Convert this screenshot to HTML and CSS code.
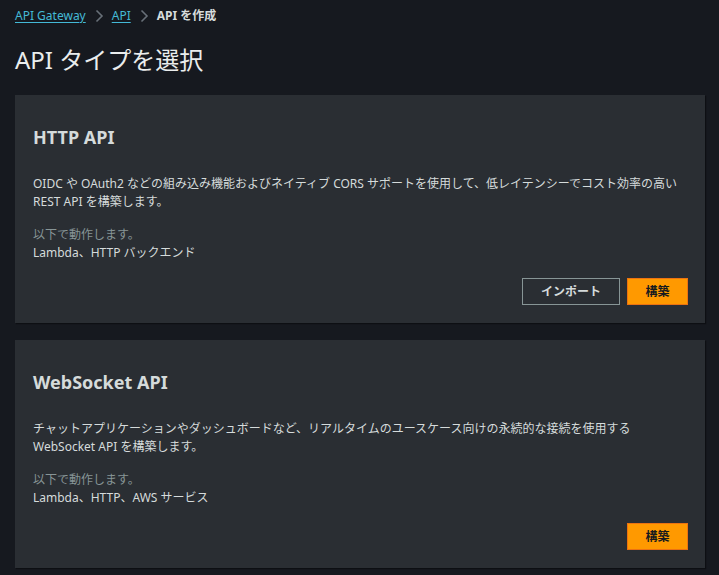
FILE: index.html
```html
<!DOCTYPE html>
<html lang="ja">

<head>
    <meta charset="UTF-8">
    <title>API タイプを選択</title>
    <link rel="stylesheet" href="styles.css">
</head>

<body>
    <div class="page">
        <nav class="breadcrumbs">
            <a class="crumb" href="#">API Gateway</a>
            <svg class="chevron" width="16" height="16" viewBox="0 0 16 16"><path d="M5.5 2.5 11 8l-5.5 5.5" /></svg>
            <a class="crumb" href="#">API</a>
            <svg class="chevron" width="16" height="16" viewBox="0 0 16 16"><path d="M5.5 2.5 11 8l-5.5 5.5" /></svg>
            <span class="crumb-current">API を作成</span>
        </nav>

        <h1 class="page-title">API タイプを選択</h1>

        <div class="card">
            <h2 class="card-title">HTTP API</h2>
            <p class="card-desc">OIDC や OAuth2 などの組み込み機能およびネイティブ CORS サポートを使用して、低レイテンシーでコスト効率の高い REST API を構築します。</p>
            <p class="works-label">以下で動作します。</p>
            <p class="works-value">Lambda、HTTP バックエンド</p>
            <div class="actions">
                <button class="btn btn-normal">インポート</button>
                <button class="btn btn-primary">構築</button>
            </div>
        </div>

        <div class="card">
            <h2 class="card-title">WebSocket API</h2>
            <p class="card-desc">チャットアプリケーションやダッシュボードなど、リアルタイムのユースケース向けの永続的な接続を使用する<br>WebSocket API を構築します。</p>
            <p class="works-label">以下で動作します。</p>
            <p class="works-value">Lambda、HTTP、AWS サービス</p>
            <div class="actions">
                <button class="btn btn-primary">構築</button>
            </div>
        </div>
    </div>
</body>

</html>
```

FILE: styles.css
```css
* {
    box-sizing: border-box;
}

body {
    margin: 0;
    background: #16191f;
    color: #d5dbdb;
    font-family: "Noto Sans", "Noto Sans CJK JP", sans-serif;
    font-size: 12px;
}

.page {
    padding: 7px 14px 0 15px;
}

.breadcrumbs {
    display: flex;
    align-items: center;
    height: 18px;
    line-height: 18px;
}

.crumb {
    color: #44b9d6;
    text-decoration: underline;
    text-underline-offset: 2px;
}

.chevron {
    margin: 0 5px;
    fill: none;
    stroke: #687078;
    stroke-width: 1.6;
}

.crumb-current {
    font-weight: bold;
    color: #d5dbdb;
}

.page-title {
    margin: 18px 0 18px;
    font-size: 24px;
    line-height: 34px;
    font-weight: normal;
    color: #eaeded;
}

.card {
    background: #2a2e33;
    padding: 30px 17px 18px 18px;
    margin-bottom: 17px;
    box-shadow: 1px 1px 1px 0 #0d0f13;
}

.card-title {
    margin: 0;
    font-size: 18px;
    line-height: 24px;
    font-weight: bold;
    color: #d5dbdb;
}

.card-desc {
    margin: 26px 0 0;
    line-height: 18px;
}

.works-label {
    margin: 15px 0 0;
    line-height: 18px;
    color: #879596;
}

.works-value {
    margin: 0;
    line-height: 18px;
}

.actions {
    display: flex;
    justify-content: flex-end;
    gap: 7px;
    margin-top: 16px;
}

.btn {
    height: 27px;
    padding: 0;
    font-family: inherit;
    font-size: 12px;
    font-weight: bold;
    line-height: 25px;
    white-space: nowrap;
    text-align: center;
    cursor: pointer;
}

.btn-normal {
    width: 98px;
    background: transparent;
    color: #d5dbdb;
    border: 1px solid #879596;
}

.btn-primary {
    width: 61px;
    background: #ff9900;
    color: #16191f;
    border: 1px solid #ec7211;
}
```
